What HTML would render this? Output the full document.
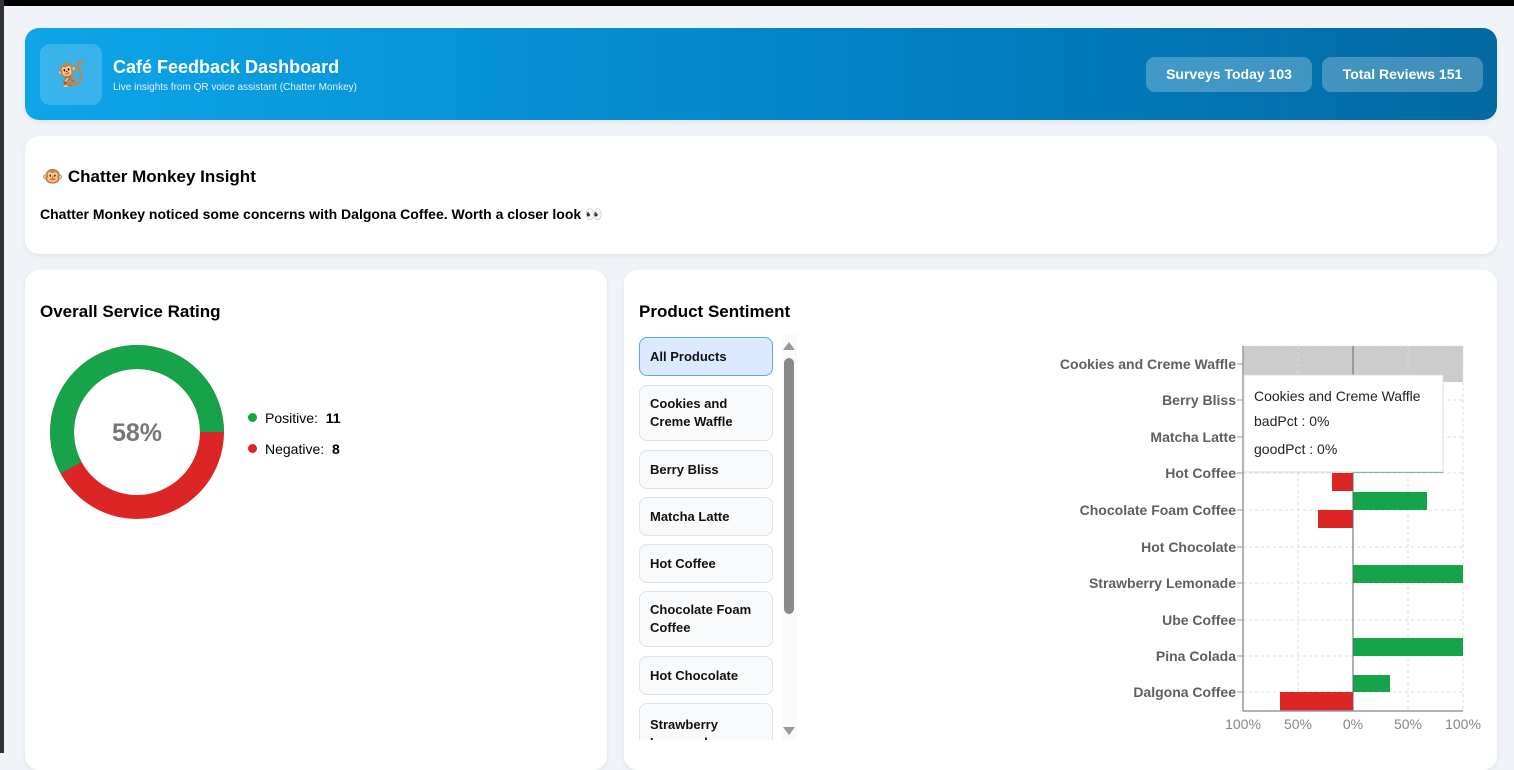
<!DOCTYPE html>
<html><head><meta charset="utf-8"><style>
*{box-sizing:border-box;margin:0;padding:0}
body{width:1514px;height:753px;overflow:hidden;background:#f0f4f8;font-family:"Liberation Sans",sans-serif;position:relative}
.abs{position:absolute}
.card{position:absolute;background:#fff;border-radius:14px;box-shadow:0 2px 6px rgba(0,0,0,.06)}
.btn{position:absolute;left:639px;width:134px;background:#f8fafc;border:1px solid #dbe3ec;border-radius:8px;font:bold 13px/18px "Liberation Sans",sans-serif;color:#111;padding:0 10px;display:flex;align-items:center}
.lbl{position:absolute;right:278px;font:bold 14px "Liberation Sans",sans-serif;color:#5f5f5f;text-align:right;white-space:nowrap}
</style></head><body>
<div class="abs" style="left:0;top:0;width:1514px;height:6px;background:#000"></div>
<div class="abs" style="left:0;top:0;width:4px;height:753px;background:#333"></div>
<div class="card" style="left:25px;top:28px;width:1472px;height:92px;background:linear-gradient(90deg,#0ea5e9,#0284c7 55%,#0369a1)"></div>
<div class="abs" style="left:40px;top:44px;width:62px;height:61px;border-radius:10px;background:rgba(255,255,255,.18);font-size:24px;text-align:center;line-height:61px">🐒</div>
<div class="abs" style="left:113px;top:57px;color:#fff;font:bold 18px 'Liberation Sans',sans-serif">Café Feedback Dashboard</div>
<div class="abs" style="left:113px;top:82px;color:#e0f2fe;font:10px 'Liberation Sans',sans-serif">Live insights from QR voice assistant (Chatter Monkey)</div>
<div class="abs" style="left:1146px;top:57px;width:166px;height:35px;border-radius:9px;background:rgba(255,255,255,.25);color:#fff;font:bold 14px/35px 'Liberation Sans',sans-serif;text-align:center">Surveys Today 103</div>
<div class="abs" style="left:1322px;top:57px;width:161px;height:35px;border-radius:9px;background:rgba(255,255,255,.25);color:#fff;font:bold 14px/35px 'Liberation Sans',sans-serif;text-align:center">Total Reviews 151</div>

<div class="card" style="left:25px;top:136px;width:1472px;height:118px"></div>
<div class="abs" style="left:42px;top:167px;font:bold 17px 'Liberation Sans',sans-serif;color:#000">🐵 Chatter Monkey Insight</div>
<div class="abs" style="left:40px;top:206px;font:bold 14px 'Liberation Sans',sans-serif;color:#000">Chatter Monkey noticed some concerns with Dalgona Coffee. Worth a closer look 👀</div>

<div class="card" style="left:25px;top:270px;width:582px;height:500px"></div>
<div class="abs" style="left:40px;top:302px;font:bold 17px 'Liberation Sans',sans-serif">Overall Service Rating</div>
<svg class="abs" style="left:50px;top:345px" width="174" height="174" viewBox="0 0 174 174">
<g transform="translate(87,87) scale(1,-1)">
<circle r="75" fill="none" stroke="#dc2626" stroke-width="24"/>
<circle r="75" fill="none" stroke="#16a34a" stroke-width="24" stroke-dasharray="272.8 500"/>
</g>
<text x="87" y="96" text-anchor="middle" font-family="Liberation Sans" font-weight="bold" font-size="25" fill="#777">58%</text>
</svg>
<div class="abs" style="left:248px;top:413px;width:9px;height:9px;border-radius:50%;background:#16a34a"></div>
<div class="abs" style="left:265px;top:410px;font:14px 'Liberation Sans',sans-serif">Positive: &nbsp;<b>11</b></div>
<div class="abs" style="left:248px;top:444px;width:9px;height:9px;border-radius:50%;background:#dc2626"></div>
<div class="abs" style="left:265px;top:441px;font:14px 'Liberation Sans',sans-serif">Negative: &nbsp;<b>8</b></div>

<div class="card" style="left:624px;top:270px;width:873px;height:500px"></div>
<div class="abs" style="left:639px;top:302px;font:bold 17px 'Liberation Sans',sans-serif">Product Sentiment</div>
<div class="abs" style="left:636px;top:334px;width:165px;height:406px;overflow:hidden">
<div class="btn" style="left:3px;top:3px;height:39px;background:#dbeafe;border-color:#60a5fa">All Products</div>
<div class="btn" style="left:3px;top:51px;height:56px">Cookies and Creme Waffle</div>
<div class="btn" style="left:3px;top:116px;height:39px">Berry Bliss</div>
<div class="btn" style="left:3px;top:163px;height:39px">Matcha Latte</div>
<div class="btn" style="left:3px;top:210px;height:39px">Hot Coffee</div>
<div class="btn" style="left:3px;top:257px;height:56px">Chocolate Foam Coffee</div>
<div class="btn" style="left:3px;top:322px;height:39px">Hot Chocolate</div>
<div class="btn" style="left:3px;top:369px;height:56px;align-items:flex-start;padding-top:12px">Strawberry Lemonade</div>
<div class="abs" style="left:146px;top:0;width:15px;height:406px;background:#fafafa"></div>
<div class="abs" style="left:148px;top:24px;width:10px;height:256px;border-radius:5px;background:#8a8a8a"></div>
<div class="abs" style="left:147px;top:8px;width:0;height:0;border-left:6px solid transparent;border-right:6px solid transparent;border-bottom:8px solid #999"></div>
<div class="abs" style="left:147px;top:393px;width:0;height:0;border-left:6px solid transparent;border-right:6px solid transparent;border-top:8px solid #999"></div>
</div>

<svg class="abs" style="left:1210px;top:340px" width="290" height="400" viewBox="1210 340 290 400">
<rect x="1243" y="346" width="220" height="36" fill="#ccc"/>
<g stroke="#ddd" stroke-dasharray="3 3">
<line x1="1298" y1="346" x2="1298" y2="711"/><line x1="1408" y1="346" x2="1408" y2="711"/><line x1="1463" y1="346" x2="1463" y2="711"/><line x1="1243" y1="346" x2="1463" y2="346"/>
<line x1="1243" y1="400" x2="1463" y2="400"/><line x1="1243" y1="437" x2="1463" y2="437"/><line x1="1243" y1="473" x2="1463" y2="473"/><line x1="1243" y1="510" x2="1463" y2="510"/><line x1="1243" y1="547" x2="1463" y2="547"/><line x1="1243" y1="583" x2="1463" y2="583"/><line x1="1243" y1="620" x2="1463" y2="620"/><line x1="1243" y1="656" x2="1463" y2="656"/><line x1="1243" y1="692" x2="1463" y2="692"/>
</g>
<rect x="1353" y="455" width="90" height="18" fill="#16a34a"/>
<rect x="1332" y="473" width="21" height="18" fill="#dc2626"/>
<rect x="1353" y="492" width="74" height="18" fill="#16a34a"/>
<rect x="1318" y="510" width="35" height="18" fill="#dc2626"/>
<rect x="1353" y="565" width="110" height="18" fill="#16a34a"/>
<rect x="1353" y="638" width="110" height="18" fill="#16a34a"/>
<rect x="1353" y="675" width="37" height="17" fill="#16a34a"/>
<rect x="1280" y="692" width="73" height="19" fill="#dc2626"/>
<line x1="1353" y1="346" x2="1353" y2="711" stroke="#666"/>
<line x1="1243" y1="346" x2="1243" y2="711" stroke="#999" stroke-width="1.5"/>
<line x1="1243" y1="711" x2="1463" y2="711" stroke="#999" stroke-width="1.5"/>
<g stroke="#999"><line x1="1237" y1="364" x2="1243" y2="364"/><line x1="1237" y1="400" x2="1243" y2="400"/><line x1="1237" y1="437" x2="1243" y2="437"/><line x1="1237" y1="473" x2="1243" y2="473"/><line x1="1237" y1="510" x2="1243" y2="510"/><line x1="1237" y1="547" x2="1243" y2="547"/><line x1="1237" y1="583" x2="1243" y2="583"/><line x1="1237" y1="620" x2="1243" y2="620"/><line x1="1237" y1="656" x2="1243" y2="656"/><line x1="1237" y1="692" x2="1243" y2="692"/></g>
<g font-family="Liberation Sans" font-size="14" fill="#888" text-anchor="middle">
<text x="1243" y="729">100%</text><text x="1298" y="729">50%</text><text x="1353" y="729">0%</text><text x="1408" y="729">50%</text><text x="1463" y="729">100%</text></g>
<rect x="1244" y="375" width="199" height="97" fill="#fff" stroke="#ddd"/>
<g font-family="Liberation Sans" font-size="14" fill="#222">
<text x="1254" y="401">Cookies and Creme Waffle</text><text x="1254" y="426">badPct : 0%</text><text x="1254" y="454">goodPct : 0%</text></g>
</svg>
<div class="lbl" style="top:356px">Cookies and Creme Waffle</div>
<div class="lbl" style="top:392px">Berry Bliss</div>
<div class="lbl" style="top:429px">Matcha Latte</div>
<div class="lbl" style="top:465px">Hot Coffee</div>
<div class="lbl" style="top:502px">Chocolate Foam Coffee</div>
<div class="lbl" style="top:539px">Hot Chocolate</div>
<div class="lbl" style="top:575px">Strawberry Lemonade</div>
<div class="lbl" style="top:612px">Ube Coffee</div>
<div class="lbl" style="top:648px">Pina Colada</div>
<div class="lbl" style="top:684px">Dalgona Coffee</div>
</body></html>
